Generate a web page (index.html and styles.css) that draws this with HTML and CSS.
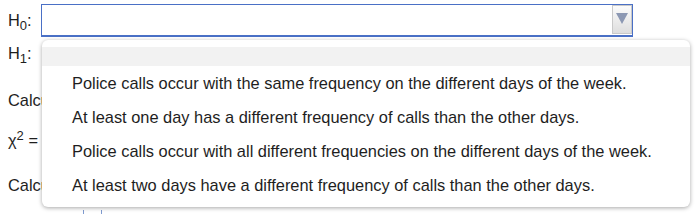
FILE: index.html
```html
<!DOCTYPE html>
<html>
<head>
<meta charset="utf-8">
<link rel="stylesheet" href="styles.css">
</head>
<body>
<div class="page">
  <div class="row r1">
    <span class="label">H<sub>0</sub>:</span>
    <div class="select">
      <span class="arrow"><span class="tri"></span></span>
    </div>
  </div>
  <div class="row r2"><span class="label">H<sub>1</sub>:</span></div>
  <div class="row r3"><span class="label">Calculate the test statistic.</span></div>
  <div class="row r4"><span class="label">χ<sup>2</sup> = </span></div>
  <div class="row r5"><span class="label">Calculate the P-value.</span></div>
  <div class="row r6"><span class="label">P-value</span><span class="box"></span><span class="note">(Round to four decimal places as needed.)</span></div>

  <div class="menu">
    <div class="band"></div>
    <div class="opt">Police calls occur with the same frequency on the different days of the week.</div>
    <div class="opt">At least one day has a different frequency of calls than the other days.</div>
    <div class="opt">Police calls occur with all different frequencies on the different days of the week.</div>
    <div class="opt">At least two days have a different frequency of calls than the other days.</div>
  </div>
</div>
</body>
</html>
```
FILE: styles.css
```css
html, body {
  margin: 0;
  padding: 0;
  background: #fff;
}
.page {
  position: relative;
  width: 700px;
  height: 214px;
  overflow: hidden;
  font-family: "Liberation Sans", Arial, sans-serif;
  font-size: 16.4px;
  color: #1e1e1e;
}
.row {
  display: flex;
  align-items: center;
  padding-left: 8px;
  height: 34px;
  white-space: nowrap;
}
.label sub, .label sup {
  font-size: 13px;
  line-height: 0;
}
.r1 {
  margin-top: 4px;
  height: 32px;
}
.r1 .label {
  width: 33px;
}
.select {
  flex: none;
  width: 590px;
  height: 30px;
  border: 1px solid #4a70c6;
  border-bottom-width: 2px;
  display: flex;
  justify-content: flex-end;
  align-items: flex-start;
}
.arrow {
  width: 18px;
  height: 27px;
  border: 1px solid #c9c9c9;
  background: linear-gradient(#fbfbfb, #dedede);
  display: flex;
  align-items: center;
  justify-content: center;
}
.tri {
  width: 0;
  height: 0;
  border-left: 6px solid transparent;
  border-right: 6px solid transparent;
  border-top: 11px solid #8c98b3;
  margin-top: -2px;
}
.r3 { margin-top: 13px; }
.r4 { margin-top: 6px; }
.r5 { margin-top: 11px; }
.r6 { margin-top: 1px; }
.box {
  display: inline-block;
  width: 17px;
  height: 20px;
  border-left: 1px solid #7f9bd0;
  border-right: 1px solid #7f9bd0;
  margin: 0 8px 0 19px;
}
.menu {
  position: absolute;
  left: 42px;
  top: 40px;
  width: 648px;
  height: 160px;
  padding: 7px 0 0;
  background: #fff;
  border-radius: 6px;
  box-shadow: 0 1px 4px rgba(0, 0, 0, 0.35);
}
.band {
  height: 19px;
  background: #f2f2f2;
}
.opt {
  height: 34px;
  display: flex;
  align-items: center;
  padding-left: 30px;
  white-space: nowrap;
}
```
